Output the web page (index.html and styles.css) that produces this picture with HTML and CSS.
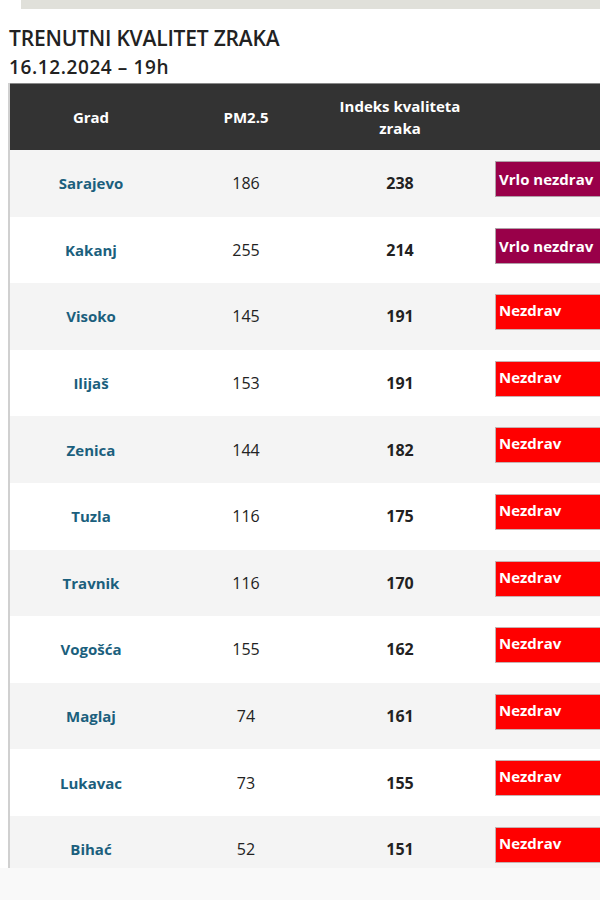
FILE: index.html
```html
<!DOCTYPE html>
<html>
<head>
<meta charset="utf-8">
<link rel="stylesheet" href="styles.css">
</head>
<body>
<div class="page">
  <div class="topbar"></div>
  <h1 class="title">TRENUTNI KVALITET ZRAKA</h1>
  <div class="date">16.12.2024 – 19h</div>
  <div class="table">
    <div class="row head">
      <div class="cell">Grad</div>
      <div class="cell">PM2.5</div>
      <div class="cell idx">Indeks kvaliteta zraka</div>
      <div class="cell"></div>
    </div>
    <div class="row odd"><div class="cell city">Sarajevo</div><div class="cell">186</div><div class="cell num">238</div><div class="cell badgecell"><span class="badge vu">Vrlo nezdrav</span></div></div>
    <div class="row"><div class="cell city">Kakanj</div><div class="cell">255</div><div class="cell num">214</div><div class="cell badgecell"><span class="badge vu">Vrlo nezdrav</span></div></div>
    <div class="row odd"><div class="cell city">Visoko</div><div class="cell">145</div><div class="cell num">191</div><div class="cell badgecell"><span class="badge un">Nezdrav</span></div></div>
    <div class="row"><div class="cell city">Ilijaš</div><div class="cell">153</div><div class="cell num">191</div><div class="cell badgecell"><span class="badge un">Nezdrav</span></div></div>
    <div class="row odd"><div class="cell city">Zenica</div><div class="cell">144</div><div class="cell num">182</div><div class="cell badgecell"><span class="badge un">Nezdrav</span></div></div>
    <div class="row"><div class="cell city">Tuzla</div><div class="cell">116</div><div class="cell num">175</div><div class="cell badgecell"><span class="badge un">Nezdrav</span></div></div>
    <div class="row odd"><div class="cell city">Travnik</div><div class="cell">116</div><div class="cell num">170</div><div class="cell badgecell"><span class="badge un">Nezdrav</span></div></div>
    <div class="row"><div class="cell city">Vogošća</div><div class="cell">155</div><div class="cell num">162</div><div class="cell badgecell"><span class="badge un">Nezdrav</span></div></div>
    <div class="row odd"><div class="cell city">Maglaj</div><div class="cell">74</div><div class="cell num">161</div><div class="cell badgecell"><span class="badge un">Nezdrav</span></div></div>
    <div class="row"><div class="cell city">Lukavac</div><div class="cell">73</div><div class="cell num">155</div><div class="cell badgecell"><span class="badge un">Nezdrav</span></div></div>
    <div class="row odd"><div class="cell city">Bihać</div><div class="cell">52</div><div class="cell num">151</div><div class="cell badgecell"><span class="badge un">Nezdrav</span></div></div>
  </div>
</div>
</body>
</html>
```
FILE: styles.css
```css
html, body {
  margin: 0;
  padding: 0;
  background: #f9f9f9;
  overflow: hidden;
}
body {
  width: 600px;
  height: 900px;
  font-family: "Open Sans", "DejaVu Sans", sans-serif;
  color: #222;
}
.page {
  height: 868px;
  background: #fff;
  overflow: hidden;
  width: 600px;
}
.topbar {
  margin-left: 21px;
  height: 9px;
  background: #e0e0da;
}
.title {
  margin: 16px 0 0 9px;
  font-size: 21px;
  font-weight: 600;
  line-height: 26px;
  color: #222;
  letter-spacing: -0.2px;
}
.date {
  margin: 4px 0 0 9px;
  font-size: 19px;
  font-weight: 600;
  line-height: 24px;
  color: #222;
  letter-spacing: 0.6px;
}
.table {
  margin-top: 4px;
  margin-left: 8px;
  width: 640px;
  border-left: 2px solid #d0d0d0;
}
.row {
  display: grid;
  grid-template-columns: 162px 148px 160px 1fr;
  height: 66.6px;
  align-items: center;
  background: #fff;
}
.row.odd {
  background: #f4f4f4;
}
.row.head {
  background: #333;
  border-top: 1px solid #888;
  height: 66px;
  color: #fff;
  font-weight: 700;
  font-size: 15px;
}
.cell {
  text-align: center;
  font-size: 16px;
  color: #222;
}
.head .cell {
  color: #fff;
  font-weight: 700;
  font-size: 15px;
  line-height: 22px;
}
.head .idx {
  padding: 0 4px;
}
.city {
  color: #1b5f7d;
  font-weight: 700;
  font-size: 15px;
}
.num {
  font-weight: 700;
}
.badgecell {
  text-align: left;
  padding-left: 15px;
  align-self: start;
  padding-top: 11px;
}
.badge {
  display: block;
  width: 140px;
  height: 36px;
  box-sizing: border-box;
  border: 1px solid #b0a0a8;
  color: #fff;
  font-weight: 700;
  font-size: 15px;
  line-height: 30px;
  padding-left: 3px;
}
.badge.vu {
  background: #990049;
  line-height: 34px;
}
.badge.un {
  background: #ff0000;
  border-color: #c8b0b0;
}
```
